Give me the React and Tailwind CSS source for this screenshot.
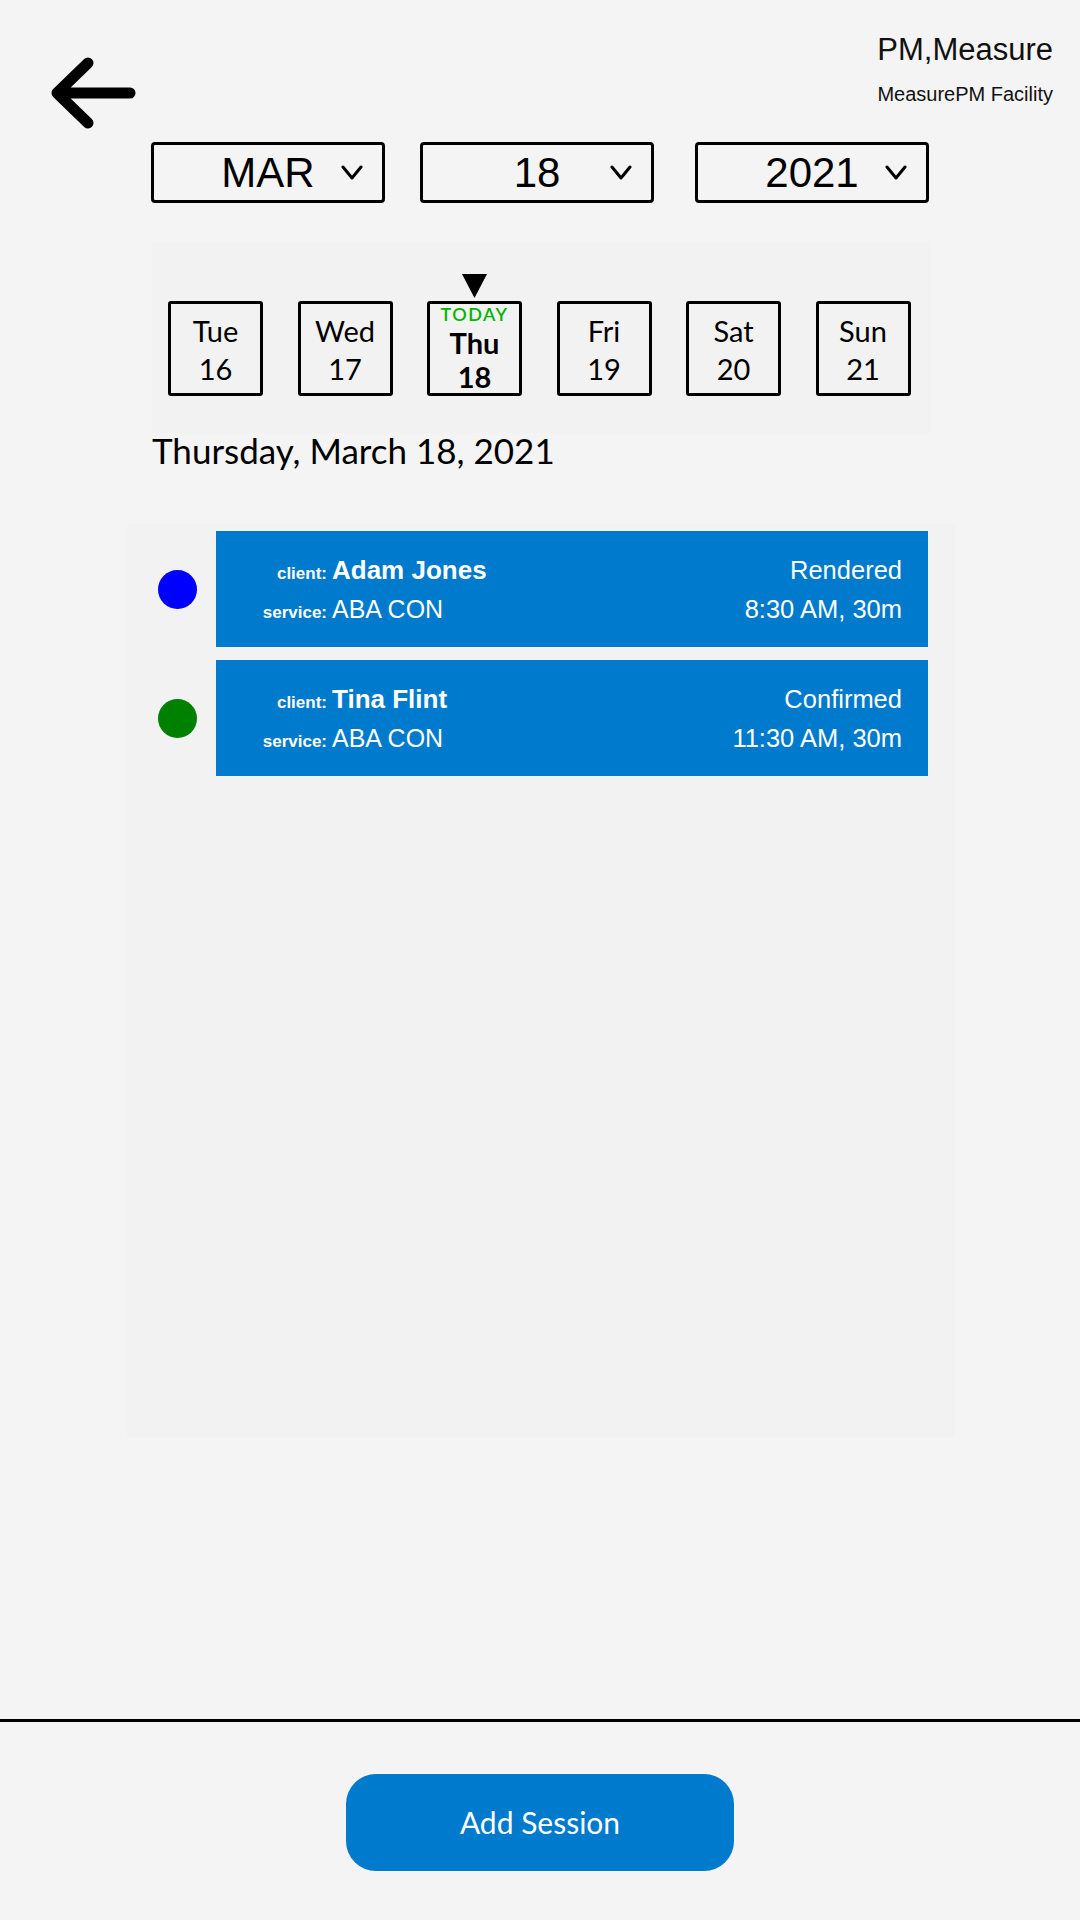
import React from 'react';

const days = [
  { name: 'Tue', num: '16' },
  { name: 'Wed', num: '17' },
  { name: 'Thu', num: '18', today: true },
  { name: 'Fri', num: '19' },
  { name: 'Sat', num: '20' },
  { name: 'Sun', num: '21' },
];

const sessions = [
  { client: 'Adam Jones', service: 'ABA CON', status: 'Rendered', time: '8:30 AM, 30m', dot: 'bg-[#0000ff]' },
  { client: 'Tina Flint', service: 'ABA CON', status: 'Confirmed', time: '11:30 AM, 30m', dot: 'bg-[#008000]' },
];

function Chevron() {
  return (
    <svg className="absolute right-[19px] top-[20px]" width="22" height="16" viewBox="0 0 22 16">
      <polyline points="2,2 11,13 20,2" fill="none" stroke="#000" strokeWidth="3" strokeLinecap="round" strokeLinejoin="round" />
    </svg>
  );
}

function Select({ value, className }) {
  return (
    <div className={`relative box-border h-[61px] w-[234px] rounded-[4px] border-[3px] border-black flex items-center justify-center ${className || ''}`}>
      <span className="text-[42px] leading-none text-black">{value}</span>
      <Chevron />
    </div>
  );
}

function DayBox({ day }) {
  return (
    <div className="flex flex-col items-center w-[95px]">
      <div className="h-[24px] w-[25px] mb-[3px]">
        {day.today && (
          <svg width="25" height="24" viewBox="0 0 25 24">
            <polygon points="0,0 25,0 12.5,24" fill="#000" />
          </svg>
        )}
      </div>
      <div className="box-border h-[95px] w-[95px] rounded-[3px] border-[3.5px] border-black flex flex-col items-center text-black" style={{ fontFamily: 'Lato, "Noto Sans", sans-serif' }}>
        {day.today ? (
          <>
            <div className="text-[18px] leading-[21.6px] font-semibold tracking-[1.5px] text-[#00b400]">TODAY</div>
            <div className="text-[29px] leading-[34px] font-bold">{day.name}</div>
            <div className="text-[29px] leading-[34px] font-bold">{day.num}</div>
          </>
        ) : (
          <div className="pt-[8px] text-[29px] leading-[38px] text-center">
            <div>{day.name}</div>
            <div>{day.num}</div>
          </div>
        )}
      </div>
    </div>
  );
}

function SessionCard({ s }) {
  return (
    <div className="flex items-center mb-[13px]">
      <div className={`h-[39px] w-[39px] rounded-full ${s.dot}`} />
      <div className="ml-[19px] h-[116px] w-[712px] bg-[#007acc] text-white flex justify-between pr-[26px] pt-[24px]">
        <div className="flex flex-col gap-[9px]">
          <div className="flex items-baseline h-[30px] leading-[30px]">
            <span className="w-[111px] text-right text-[17px] leading-[20px] font-bold">client:</span>
            <span className="ml-[5px] text-[26px] font-bold">{s.client}</span>
          </div>
          <div className="flex items-baseline h-[30px] leading-[30px]">
            <span className="w-[111px] text-right text-[17px] leading-[20px] font-bold">service:</span>
            <span className="ml-[5px] text-[25px]">{s.service}</span>
          </div>
        </div>
        <div className="flex flex-col gap-[9px] text-right text-[25.5px] leading-[30px]">
          <div>{s.status}</div>
          <div>{s.time}</div>
        </div>
      </div>
    </div>
  );
}

export default function App() {
  return (
    <div className="w-[1080px] h-[1920px] bg-[#f4f4f4] flex flex-col overflow-hidden" style={{ fontFamily: '"Liberation Sans", Arial, sans-serif' }}>
      <div className="h-[142px] flex justify-between items-start">
        <svg className="ml-[50px] mt-[57px]" width="86" height="72" viewBox="0 0 86 72">
          <path d="M38 6 L7 36 L38 66 M7 36 L80 36" fill="none" stroke="#000" strokeWidth="11" strokeLinecap="round" strokeLinejoin="round" />
        </svg>
        <div className="mt-[34px] mr-[27px] text-right text-[#111]">
          <div className="text-[31px] leading-[31px]">PM,Measure</div>
          <div className="mt-[19px] text-[20px] leading-[20px]">MeasurePM Facility</div>
        </div>
      </div>

      <div className="flex ml-[151px]">
        <Select value="MAR" />
        <Select value="18" className="ml-[35px]" />
        <Select value="2021" className="ml-[41px]" />
      </div>

      <div className="mt-[38px] ml-[152px] w-[779px] bg-[#f2f2f2] pl-[16px] pt-[33px] pb-[37px] flex gap-[34.5px]">
        {days.map(d => (
          <DayBox key={d.name} day={d} />
        ))}
      </div>

      <div className="ml-[152px] text-[35px] leading-[35px] text-black" style={{ fontFamily: 'Lato, "Noto Sans", sans-serif' }}>
        Thursday, March 18, 2021
      </div>

      <div className="mt-[56px] ml-[127px] w-[828px] h-[913px] bg-[#f2f2f2] pl-[31px] pt-[7px]">
        {sessions.map(s => (
          <SessionCard key={s.client} s={s} />
        ))}
      </div>

      <div className="mt-auto border-t-[3px] border-black h-[201px] flex justify-center">
        <button className="mt-[52px] h-[97px] w-[388px] rounded-[30px] bg-[#007acc] text-white text-[30px]" style={{ fontFamily: 'Lato, "Noto Sans", sans-serif' }}>
          Add Session
        </button>
      </div>
    </div>
  );
}
